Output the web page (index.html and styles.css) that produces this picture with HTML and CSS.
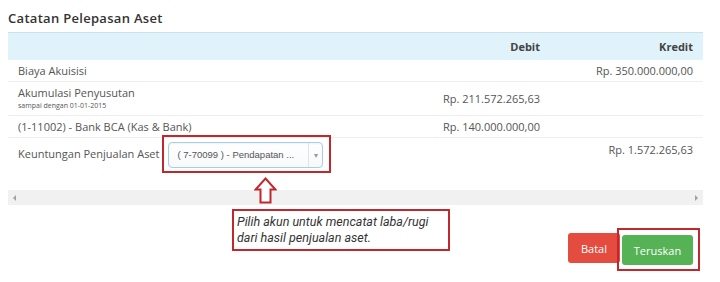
FILE: index.html
```html
<!DOCTYPE html>
<html lang="id">
<head>
    <meta charset="UTF-8">
    <title>Catatan Pelepasan Aset</title>
    <link rel="stylesheet" href="styles.css">
</head>
<body>
<div class="panel">
    <h3 class="judul">Catatan Pelepasan Aset</h3>

    <!-- Tabel jurnal pelepasan -->
    <div class="tabel-wrap">
        <table class="jurnal">
            <thead>
                <tr>
                    <th class="akun"></th>
                    <th class="angka debit">Debit</th>
                    <th class="angka kredit">Kredit</th>
                </tr>
            </thead>
            <tbody>
                <tr>
                    <td>Biaya Akuisisi</td>
                    <td class="angka"></td>
                    <td class="angka">Rp. 350.000.000,00</td>
                </tr>
                <tr class="baris-sub">
                    <td>Akumulasi Penyusutan<small>sampai dengan 01-01-2015</small></td>
                    <td class="angka">Rp. 211.572.265,63</td>
                    <td class="angka"></td>
                </tr>
                <tr>
                    <td>(1-11002) - Bank BCA (Kas &amp; Bank)</td>
                    <td class="angka">Rp. 140.000.000,00</td>
                    <td class="angka"></td>
                </tr>
                <tr class="baris-pilih">
                    <td>Keuntungan Penjualan Aset<span class="pilih">
                        <span class="pilih-teks">( 7-70099 ) - Pendapatan ...</span>
                        <span class="pilih-panah">&#9662;</span>
                    </span></td>
                    <td class="angka"></td>
                    <td class="angka atas">Rp. 1.572.265,63</td>
                </tr>
            </tbody>
        </table>
        <div class="scrollbar">
            <span class="sb-kiri"></span>
            <span class="sb-kanan"></span>
        </div>
    </div>

    <!-- Tombol aksi -->
    <div class="aksi">
        <button class="btn batal">Batal</button>
        <span class="sorot">
            <button class="btn teruskan">Teruskan</button>
        </span>
    </div>

    <!-- Anotasi -->
    <svg class="panah-anotasi" width="23" height="27" viewBox="0 0 23 27">
        <polygon points="11.5,1.5 21.5,12.5 16.5,12.5 16.5,25.5 6.5,25.5 6.5,12.5 1.5,12.5" fill="#fff" stroke="#c1272d" stroke-width="2"/>
    </svg>
    <div class="catatan">Pilih akun untuk mencatat laba/rugi<br>dari hasil penjualan aset.</div>
</div>
</body>
</html>
```

FILE: styles.css
```css
/* Umum */
body {
    margin: 0;
    background: #fff;
    font-family: 'Open Sans', sans-serif;
    color: #555;
}

.panel {
    position: relative;
    width: 695px;
    padding: 10px 0 0 8px;
}

.judul {
    margin: 0 0 6px;
    font-size: 13px;
    line-height: 16px;
    font-weight: 600;
    letter-spacing: 0.3px;
    color: #333;
}

/* Tabel */
.tabel-wrap {
    width: 695px;
}

.jurnal {
    width: 100%;
    border-collapse: collapse;
    font-size: 11px;
    margin-bottom: 14px;
}

.jurnal thead tr {
    background: #e0f3fa;
    border-top: 1px solid #c9e3ee;
}

.jurnal th {
    height: 27px;
    padding: 0 10px;
    font-weight: 700;
    color: #444;
}

.jurnal td {
    padding: 4px 10px 3px;
    line-height: 14px;
    border-bottom: 1px solid #eee;
    vertical-align: middle;
}

.jurnal tbody tr:last-child td {
    border-bottom: none;
}

.jurnal td small {
    display: block;
    font-size: 7px;
    line-height: 11px;
}

.baris-sub td {
    padding-bottom: 4px;
}

.angka {
    text-align: right;
    white-space: nowrap;
}

.debit {
    width: 180px;
}

.kredit {
    width: 133px;
}

.baris-pilih td {
    padding-top: 4px;
    padding-bottom: 8px;
}

.jurnal td.atas {
    vertical-align: top;
    padding-top: 5px;
}

/* Dropdown akun */
.pilih {
    position: relative;
    display: inline-flex;
    align-items: center;
    vertical-align: middle;
    width: 153px;
    height: 24px;
    margin-left: 9px;
    border: 1px solid #a9cee4;
    border-radius: 4px;
    background: linear-gradient(#fff, #f7f9fb);
    box-shadow: inset 0 1px 2px rgba(0, 0, 0, 0.06);
}

/* kotak merah anotasi */
.pilih::after {
    content: '';
    position: absolute;
    top: -8px;
    right: -9px;
    bottom: -6px;
    left: -7px;
    border: 2px solid #c1272d;
}

.pilih-teks {
    flex: 1;
    padding-left: 8px;
    font-family: 'Liberation Sans', sans-serif;
    font-size: 9.5px;
    color: #555;
}

.pilih-panah {
    width: 13px;
    height: 24px;
    border-left: 1px solid #e3e3e3;
    font-size: 8px;
    line-height: 24px;
    text-align: center;
    color: #999;
}

/* Scrollbar palsu */
.scrollbar {
    position: relative;
    height: 15px;
    background: #f1f1f1;
}

.sb-kiri,
.sb-kanan {
    position: absolute;
    top: 5px;
    width: 0;
    height: 0;
    border-top: 3px solid transparent;
    border-bottom: 3px solid transparent;
}

.sb-kiri {
    left: 5px;
    border-right: 3px solid #a0a0a0;
}

.sb-kanan {
    right: 5px;
    border-left: 3px solid #a0a0a0;
}

/* Tombol */
.aksi {
    display: flex;
    justify-content: flex-end;
    align-items: flex-start;
    margin-top: 23px;
    padding-right: 3px;
}

.btn {
    height: 30px;
    border: none;
    border-radius: 3px;
    color: #fff;
    font-family: 'Open Sans', sans-serif;
    font-size: 11px;
    cursor: pointer;
}

.batal {
    width: 52px;
    margin-top: 5px;
    background: #e34c3f;
}

/* kotak merah anotasi di tombol */
.sorot {
    display: flex;
    margin-left: -3px;
    padding: 5px 5px 4px 3px;
    border: 2px solid #c1272d;
}

.teruskan {
    width: 71px;
    background: #55b255;
}

/* Anotasi */
.panah-anotasi {
    position: absolute;
    left: 254px;
    top: 177px;
}

.catatan {
    position: absolute;
    left: 232px;
    top: 209px;
    width: 208px;
    padding: 3px;
    border: 2px solid #c1272d;
    background: #fff;
    font-family: 'Roboto', sans-serif;
    font-style: italic;
    font-size: 12.5px;
    line-height: 16px;
    color: #333;
}
```
